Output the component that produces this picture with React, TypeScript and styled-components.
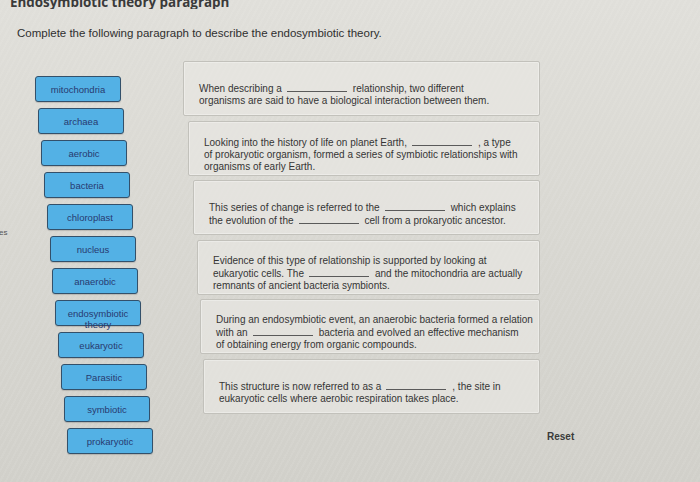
import { FC } from "react";
import styled, { createGlobalStyle } from "styled-components";

const GlobalStyle = createGlobalStyle`
  html, body {
    margin: 0;
    padding: 0;
    background: #d8d7d1;
  }
  #root {
    width: 700px;
    height: 482px;
  }
`;

const Page = styled.div`
  position: relative;
  width: 700px;
  height: 482px;
  overflow: hidden;
  font-family: "Liberation Sans", Arial, sans-serif;
  color: #333;
  background:
    repeating-linear-gradient(
      118deg,
      rgba(255, 255, 255, 0.06) 0 2px,
      rgba(0, 0, 0, 0) 2px 5px
    ),
    linear-gradient(180deg, #e0dfda 0%, #d9d8d2 45%, #d1d0ca 100%);
`;

const TitleBar = styled.div`
  height: 9px;
  overflow: hidden;
  padding-left: 10px;
  display: flex;
  align-items: flex-end;
`;

const Title = styled.h1`
  margin: 0;
  font-family: "Open Sans", "Liberation Sans", sans-serif;
  font-size: 13.4px;
  font-weight: 700;
  line-height: 13px;
  color: #3a3a3a;
  white-space: nowrap;
`;

const Instruction = styled.p`
  margin: 17px 0 0;
  padding-left: 17px;
  font-size: 11.5px;
  line-height: 14px;
  color: #2f2f2f;
`;

const Main = styled.div`
  display: grid;
  grid-template-columns: 148px 357px auto;
  padding-left: 35px;
  margin-top: 21px;
`;

const ChipColumn = styled.div`
  display: flex;
  flex-direction: column;
  gap: 6px;
  padding-top: 15px;
`;

const Chip = styled.div<{ $shift: number }>`
  box-sizing: border-box;
  width: 86px;
  height: 26px;
  margin-left: ${(p) => p.$shift}px;
  padding: 7px 4px 0;
  background: #53b1e5;
  border: 1.5px solid #33506a;
  border-radius: 3px;
  box-shadow: 0 1px 1px rgba(0, 0, 0, 0.15);
  font-size: 9.5px;
  line-height: 11px;
  text-align: center;
  color: #283a70;
`;

const BoxColumn = styled.div`
  display: flex;
  flex-direction: column;
  gap: 4.5px;
`;

const Box = styled.div<{ $shift: number }>`
  box-sizing: border-box;
  min-height: 55px;
  margin-left: ${(p) => p.$shift}px;
  padding: 12px 10px 0 15px;
  display: flex;
  flex-direction: column;
  justify-content: center;
  background: rgba(232, 231, 226, 0.7);
  border: 1px solid #c2c1bb;
  border-radius: 2px;
  box-shadow: inset 0 0 0 1px rgba(255, 255, 255, 0.3);
`;

const Line = styled.div`
  font-size: 10px;
  line-height: 12px;
  white-space: nowrap;
  color: #353535;
`;

const Blank = styled.span`
  display: inline-block;
  width: 60px;
  height: 9px;
  margin: 0 6px 0 5px;
  border-bottom: 1px solid #5a5a5a;
  vertical-align: baseline;
`;

const ResetCell = styled.div`
  align-self: end;
  padding-left: 7px;
  margin-bottom: 10px;
`;

const ResetButton = styled.button`
  padding: 0;
  border: none;
  background: none;
  font-family: "Liberation Sans", Arial, sans-serif;
  font-size: 10px;
  font-weight: 700;
  color: #3a3a3a;
  cursor: pointer;
`;

const EdgeText = styled.span`
  position: absolute;
  left: -1px;
  top: 228px;
  font-size: 8px;
  color: #555;
`;

const labels = [
  "mitochondria",
  "archaea",
  "aerobic",
  "bacteria",
  "chloroplast",
  "nucleus",
  "anaerobic",
  "endosymbiotic theory",
  "eukaryotic",
  "Parasitic",
  "symbiotic",
  "prokaryotic",
];

// each line is split on "_" where a drop blank goes
const paragraphs: string[][] = [
  [
    "When describing a_relationship, two different",
    "organisms are said to have a biological interaction between them.",
  ],
  [
    "Looking into the history of life on planet Earth,_, a type",
    "of prokaryotic organism, formed a series of symbiotic relationships with",
    "organisms of early Earth.",
  ],
  [
    "This series of change is referred to the_which explains",
    "the evolution of the_cell from a prokaryotic ancestor.",
  ],
  [
    "Evidence of this type of relationship is supported by looking at",
    "eukaryotic cells. The_and the mitochondria are actually",
    "remnants of ancient bacteria symbionts.",
  ],
  [
    "During an endosymbiotic event, an anaerobic bacteria formed a relation",
    "with an_bacteria and evolved an effective mechanism",
    "of obtaining energy from organic compounds.",
  ],
  [
    "This structure is now referred to as a_, the site in",
    "eukaryotic cells where aerobic respiration takes place.",
  ],
];

const boxShifts = [0, 5, 10, 14, 17, 20];

const App: FC = () => {
  return (
    <Page>
      <GlobalStyle />
      <TitleBar>
        <Title>Endosymbiotic theory paragraph</Title>
      </TitleBar>
      <Instruction>
        Complete the following paragraph to describe the endosymbiotic theory.
      </Instruction>

      <Main>
        <ChipColumn>
          {labels.map((label, i) => (
            <Chip key={label} $shift={Math.round(i * 2.9)}>
              {label}
            </Chip>
          ))}
        </ChipColumn>

        <BoxColumn>
          {paragraphs.map((lines, i) => (
            <Box key={i} $shift={boxShifts[i]}>
              {lines.map((line, j) => {
                const parts = line.split("_");
                return (
                  <Line key={j}>
                    {parts.map((part, k) => (
                      <span key={k}>
                        {k > 0 && <Blank />}
                        {part}
                      </span>
                    ))}
                  </Line>
                );
              })}
            </Box>
          ))}
        </BoxColumn>

        <ResetCell>
          <ResetButton type="button">Reset</ResetButton>
        </ResetCell>
      </Main>

      <EdgeText>es</EdgeText>
    </Page>
  );
};

export default App;
